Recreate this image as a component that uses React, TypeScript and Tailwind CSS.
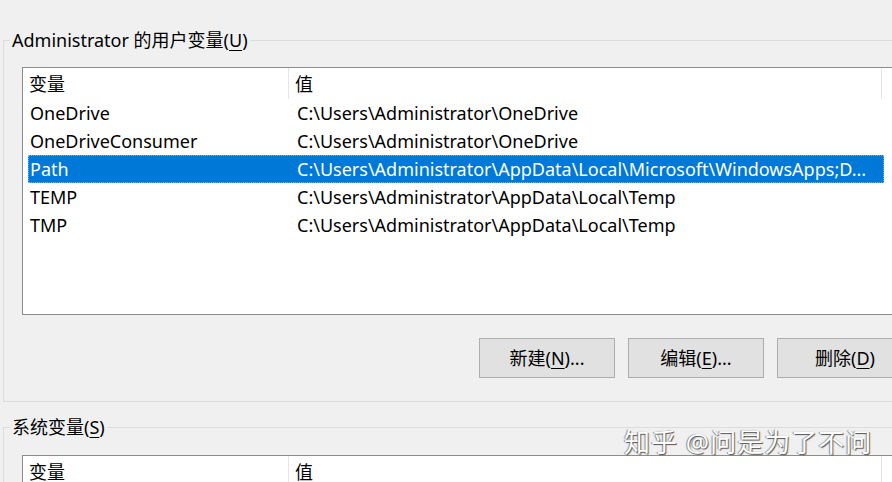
import React from "react";

const font = { fontFamily: '"Noto Sans", "Noto Sans CJK SC", sans-serif' };

function U({ c }: { c: string }) {
  return <span className="underline underline-offset-[3px] decoration-[1px]">{c}</span>;
}

type Row = { name: string; value: string; sel?: boolean };

function ListBox({ rows, height }: { rows: Row[]; height: string }) {
  return (
    <div className={`ml-[18px] w-[900px] border border-[#8c8c8c] bg-white ${height} overflow-hidden`}>
      <div className="flex h-[31px] items-center">
        <div className="flex h-full w-[266px] items-center border-r border-[#e5e5e5] pl-[6px]">变量</div>
        <div className="flex h-full w-[593px] items-center border-r border-[#e5e5e5] pl-[6px]">值</div>
      </div>
      {rows.map((r) => (
        <div
          key={r.name}
          className={`ml-[5px] flex h-[28px] w-[856px] items-center whitespace-nowrap ${
            r.sel ? "bg-[#0078d7] text-white outline-1 outline-dotted outline-[#7fb4e6] -outline-offset-1" : ""
          }`}
        >
          <div className="w-[262px] pl-[2px]">{r.name}</div>
          <div className="flex-1 overflow-hidden pl-[7px]">{r.value}</div>
        </div>
      ))}
    </div>
  );
}

function Btn({ children }: { children: React.ReactNode }) {
  return (
    <div className="flex h-[40px] w-[136px] shrink-0 items-center justify-center border border-[#adadad] bg-[#e1e1e1]">
      {children}
    </div>
  );
}

export default function App() {
  const rows: Row[] = [
    { name: "OneDrive", value: "C:\\Users\\Administrator\\OneDrive" },
    { name: "OneDriveConsumer", value: "C:\\Users\\Administrator\\OneDrive" },
    {
      name: "Path",
      value: "C:\\Users\\Administrator\\AppData\\Local\\Microsoft\\WindowsApps;D...",
      sel: true,
    },
    { name: "TEMP", value: "C:\\Users\\Administrator\\AppData\\Local\\Temp" },
    { name: "TMP", value: "C:\\Users\\Administrator\\AppData\\Local\\Temp" },
  ];
  return (
    <div
      className="relative h-[482px] w-[892px] overflow-hidden bg-[#f0f0f0] text-[18px] leading-[24px] text-black"
      style={font}
    >
      <fieldset className="ml-[3px] mt-[28px] w-[960px] border border-r-0 border-[#dcdcdc] pb-[23px]">
        <legend className="ml-[6px] px-[2px] text-[18px] leading-[24px]">
          Administrator 的用户变量(<U c="U" />)
        </legend>
        <div className="mt-[15px]">
          <ListBox rows={rows} height="h-[248px]" />
        </div>
        <div className="mt-[23px] flex gap-[13px] pl-[475px]">
          <Btn>
            新建(<U c="N" />)...
          </Btn>
          <Btn>
            编辑(<U c="E" />)...
          </Btn>
          <Btn>
            删除(<U c="D" />)
          </Btn>
        </div>
      </fieldset>
      <fieldset className="ml-[3px] mt-[13px] w-[960px] border border-r-0 border-b-0 border-[#dcdcdc]">
        <legend className="ml-[6px] px-[2px] text-[18px] leading-[24px]">
          系统变量(<U c="S" />)
        </legend>
        <div className="mt-[16px]">
          <ListBox rows={[]} height="h-[100px]" />
        </div>
      </fieldset>
      <div
        className="absolute left-[624px] top-[428px] text-[26px] leading-[28px] tracking-[1px] text-white [text-shadow:1px_1px_1px_#555,-1px_0_1px_#888]"
        style={font}
      >
        知乎 @问是为了不问
      </div>
    </div>
  );
}
